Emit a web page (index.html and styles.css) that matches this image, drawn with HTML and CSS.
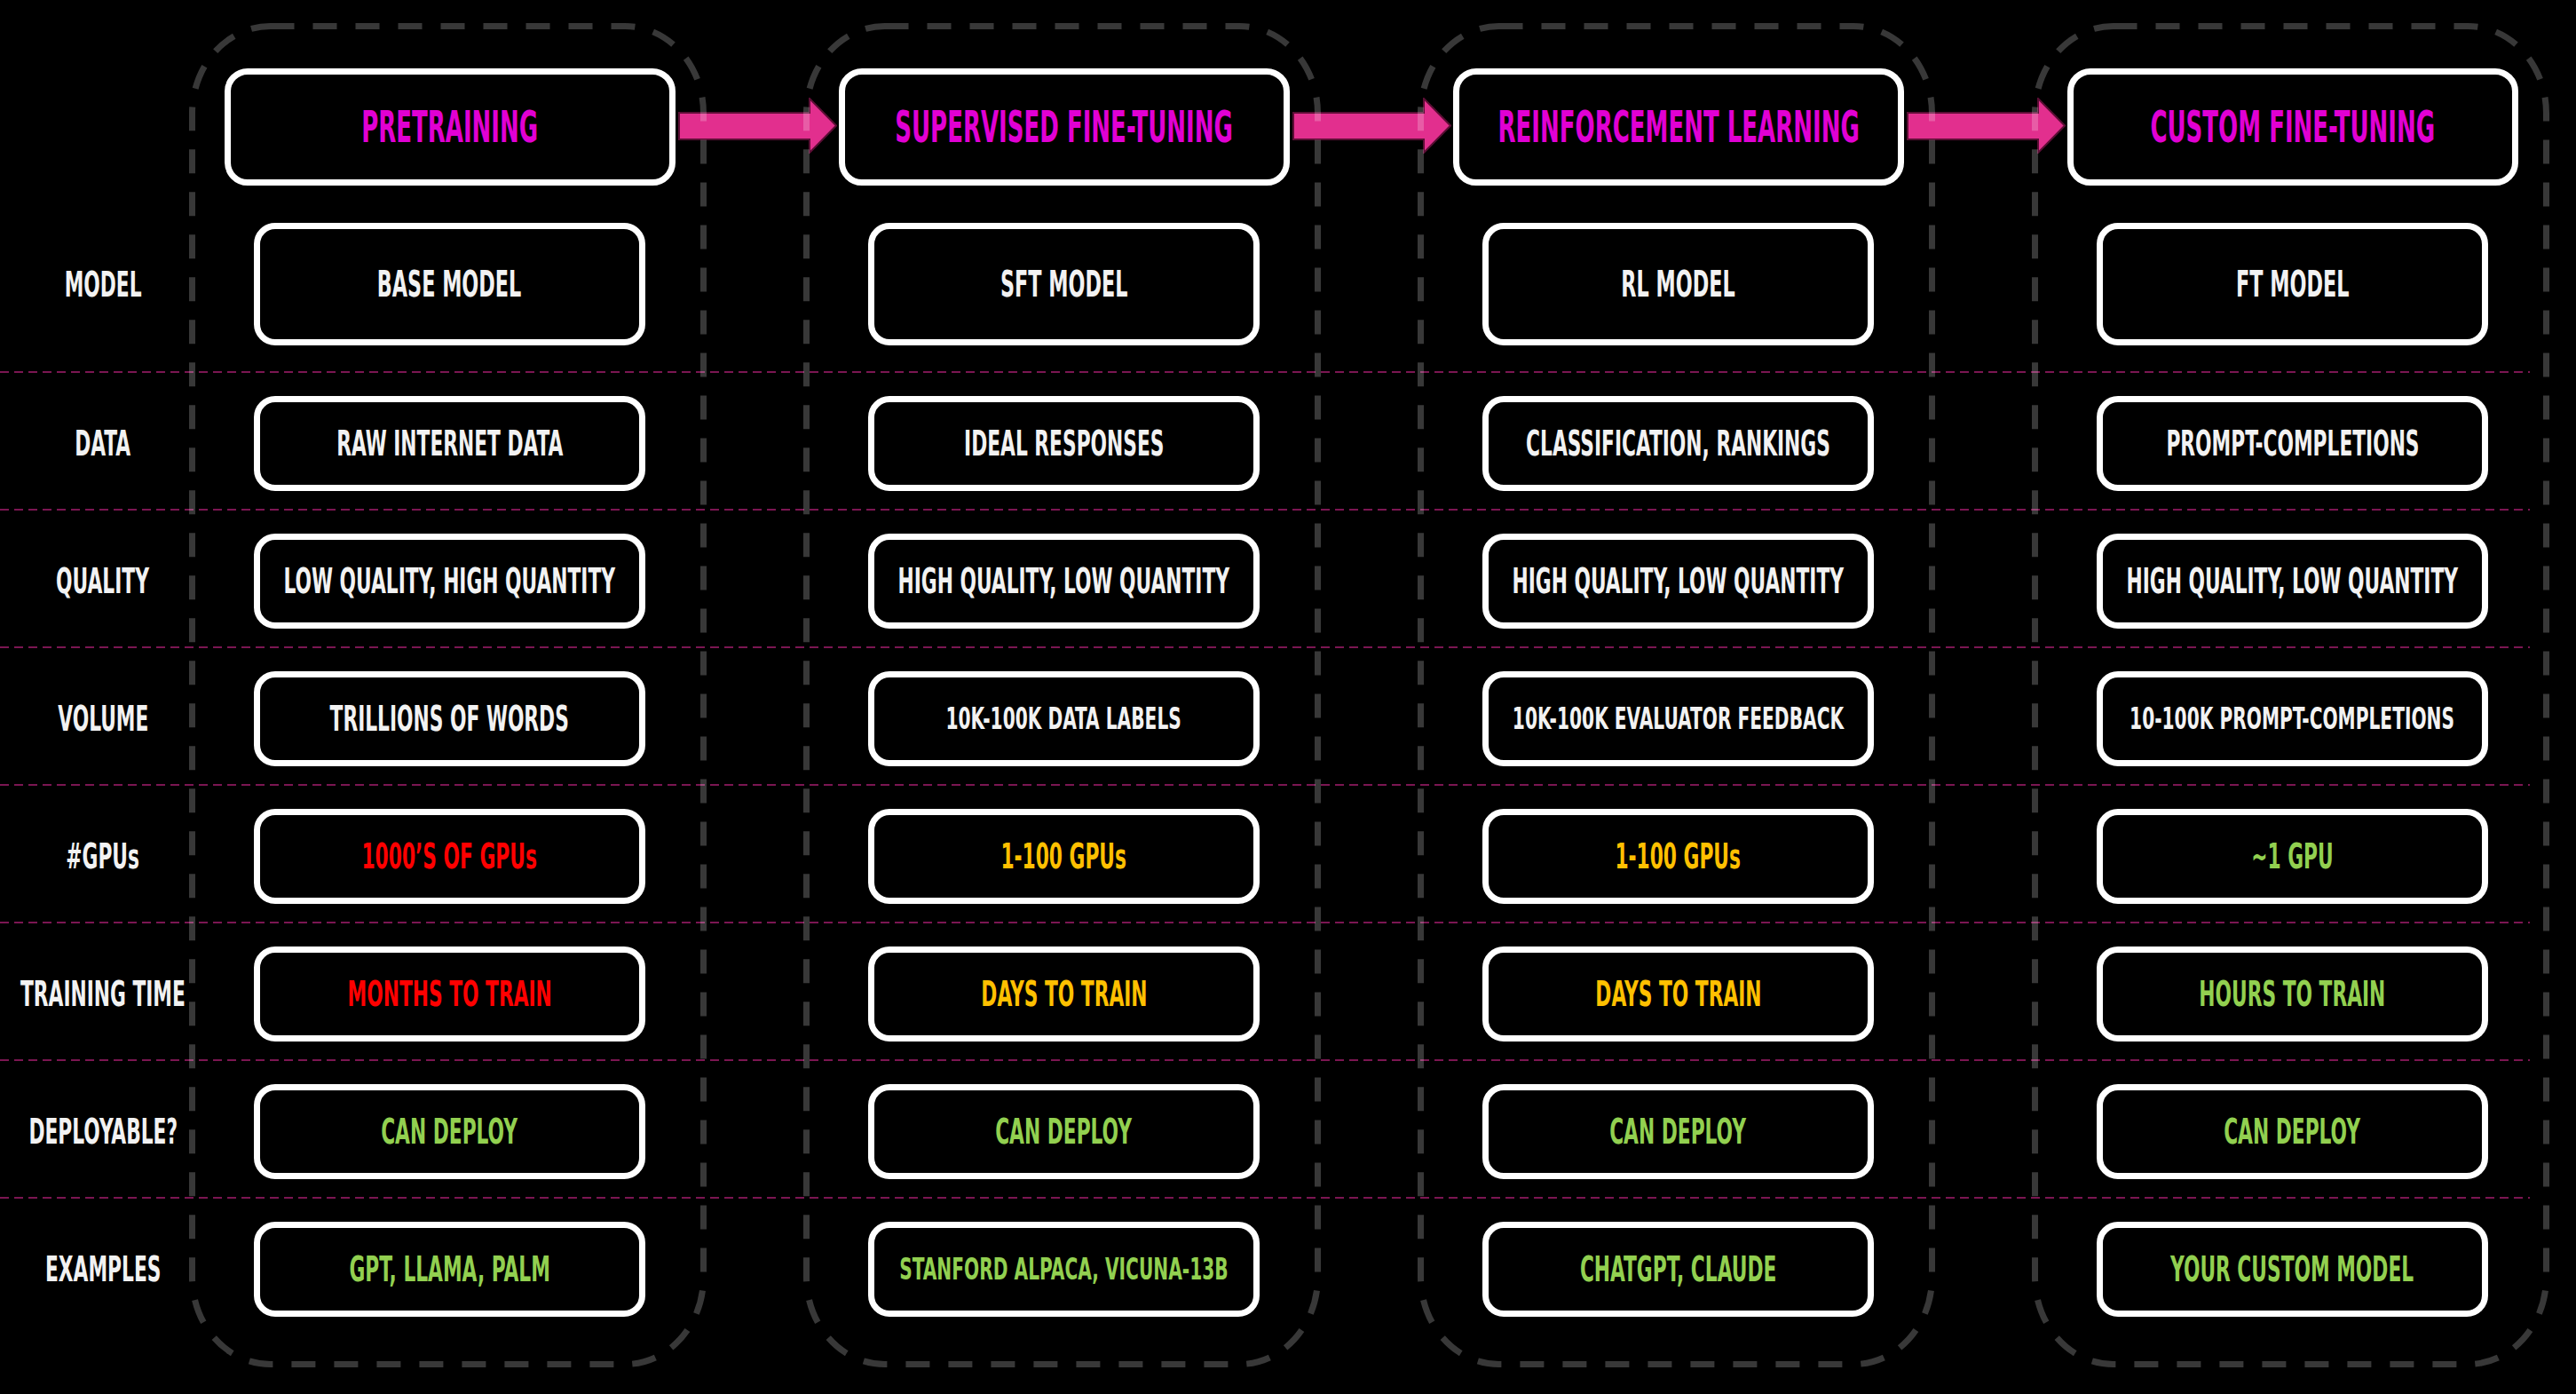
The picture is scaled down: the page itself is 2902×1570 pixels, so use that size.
FILE: index.html
```html
<!DOCTYPE html>
<html lang="en">
<head>
    <meta charset="UTF-8">
    <title>LLM Training Stages</title>
    <link rel="stylesheet" href="styles.css">
</head>
<body>
    <div class="board">
        <!-- stage headers -->
        <div class="stage c1"><span class="txt">PRETRAINING</span></div>
        <div class="arrow g1"><svg width="179" height="63" viewBox="0 0 179 63"><polygon points="1,17 148,17 148,1 178,31.5 148,62 148,47 1,47"/></svg></div>
        <div class="stage c2"><span class="txt">SUPERVISED FINE-TUNING</span></div>
        <div class="arrow g2"><svg width="179" height="63" viewBox="0 0 179 63"><polygon points="1,17 148,17 148,1 178,31.5 148,62 148,47 1,47"/></svg></div>
        <div class="stage c3"><span class="txt">REINFORCEMENT LEARNING</span></div>
        <div class="arrow g3"><svg width="179" height="63" viewBox="0 0 179 63"><polygon points="1,17 148,17 148,1 178,31.5 148,62 148,47 1,47"/></svg></div>
        <div class="stage c4"><span class="txt">CUSTOM FINE-TUNING</span></div>

        <!-- model -->
        <div class="label model r1"><span class="txt">MODEL</span></div>
        <div class="cell model r1 c1"><span class="txt">BASE MODEL</span></div>
        <div class="cell model r1 c2"><span class="txt">SFT MODEL</span></div>
        <div class="cell model r1 c3"><span class="txt">RL MODEL</span></div>
        <div class="cell model r1 c4"><span class="txt">FT MODEL</span></div>

        <!-- data -->
        <div class="rule r2"></div>
        <div class="label r2"><span class="txt">DATA</span></div>
        <div class="cell r2 c1"><span class="txt">RAW INTERNET DATA</span></div>
        <div class="cell r2 c2"><span class="txt">IDEAL RESPONSES</span></div>
        <div class="cell r2 c3"><span class="txt">CLASSIFICATION, RANKINGS</span></div>
        <div class="cell r2 c4"><span class="txt">PROMPT-COMPLETIONS</span></div>

        <!-- quality -->
        <div class="rule r3"></div>
        <div class="label r3"><span class="txt">QUALITY</span></div>
        <div class="cell r3 c1"><span class="txt">LOW QUALITY, HIGH QUANTITY</span></div>
        <div class="cell r3 c2"><span class="txt">HIGH QUALITY, LOW QUANTITY</span></div>
        <div class="cell r3 c3"><span class="txt">HIGH QUALITY, LOW QUANTITY</span></div>
        <div class="cell r3 c4"><span class="txt">HIGH QUALITY, LOW QUANTITY</span></div>

        <!-- volume -->
        <div class="rule r4"></div>
        <div class="label r4"><span class="txt">VOLUME</span></div>
        <div class="cell r4 c1"><span class="txt">TRILLIONS OF WORDS</span></div>
        <div class="cell small r4 c2"><span class="txt">10K-100K DATA LABELS</span></div>
        <div class="cell small r4 c3"><span class="txt">10K-100K EVALUATOR FEEDBACK</span></div>
        <div class="cell small r4 c4"><span class="txt">10-100K PROMPT-COMPLETIONS</span></div>

        <!-- gpus -->
        <div class="rule r5"></div>
        <div class="label r5"><span class="txt">#GPUs</span></div>
        <div class="cell red r5 c1"><span class="txt">1000’S OF GPUs</span></div>
        <div class="cell amber r5 c2"><span class="txt">1-100 GPUs</span></div>
        <div class="cell amber r5 c3"><span class="txt">1-100 GPUs</span></div>
        <div class="cell green r5 c4"><span class="txt">~1 GPU</span></div>

        <!-- training time -->
        <div class="rule r6"></div>
        <div class="label r6"><span class="txt">TRAINING TIME</span></div>
        <div class="cell red r6 c1"><span class="txt">MONTHS TO TRAIN</span></div>
        <div class="cell amber r6 c2"><span class="txt">DAYS TO TRAIN</span></div>
        <div class="cell amber r6 c3"><span class="txt">DAYS TO TRAIN</span></div>
        <div class="cell green r6 c4"><span class="txt">HOURS TO TRAIN</span></div>

        <!-- deployable -->
        <div class="rule r7"></div>
        <div class="label r7"><span class="txt">DEPLOYABLE?</span></div>
        <div class="cell green r7 c1"><span class="txt">CAN DEPLOY</span></div>
        <div class="cell green r7 c2"><span class="txt">CAN DEPLOY</span></div>
        <div class="cell green r7 c3"><span class="txt">CAN DEPLOY</span></div>
        <div class="cell green r7 c4"><span class="txt">CAN DEPLOY</span></div>

        <!-- examples -->
        <div class="rule r8"></div>
        <div class="label r8"><span class="txt">EXAMPLES</span></div>
        <div class="cell green r8 c1"><span class="txt">GPT, LLAMA, PALM</span></div>
        <div class="cell green small r8 c2"><span class="txt">STANFORD ALPACA, VICUNA-13B</span></div>
        <div class="cell green r8 c3"><span class="txt">CHATGPT, CLAUDE</span></div>
        <div class="cell green r8 c4"><span class="txt">YOUR CUSTOM MODEL</span></div>

        <!-- dashed lanes, drawn last so they sit over the arrows -->
        <div class="lane c1"><svg width="583" height="1514"><rect x="3.5" y="3.5" width="576" height="1507" rx="88" ry="98"/></svg></div>
        <div class="lane c2"><svg width="583" height="1514"><rect x="3.5" y="3.5" width="576" height="1507" rx="88" ry="98"/></svg></div>
        <div class="lane c3"><svg width="583" height="1514"><rect x="3.5" y="3.5" width="576" height="1507" rx="88" ry="98"/></svg></div>
        <div class="lane c4"><svg width="583" height="1514"><rect x="3.5" y="3.5" width="576" height="1507" rx="88" ry="98"/></svg></div>
    </div>
</body>
</html>
```

FILE: styles.css
```css
body {
    margin: 0;
    background: #000;
    color: #f2f2f2;
    font-family: "Liberation Sans Narrow", "DejaVu Sans Condensed", sans-serif;
    font-weight: 700;
}
.board {
    display: grid;
    grid-template-columns: 213px 583px 109px 583px 109px 583px 109px 583px;
    grid-template-rows: 204px 189px repeat(7, 155px) 36px;
    padding-top: 26px;
    width: 2872px;
}
.c1 { grid-column: 2; }
.c2 { grid-column: 4; }
.c3 { grid-column: 6; }
.c4 { grid-column: 8; }
.g1 { grid-column: 3; }
.g2 { grid-column: 5; }
.g3 { grid-column: 7; }
.r1 { grid-row: 2; }
.r2 { grid-row: 3; }
.r3 { grid-row: 4; }
.r4 { grid-row: 5; }
.r5 { grid-row: 6; }
.r6 { grid-row: 7; }
.r7 { grid-row: 8; }
.r8 { grid-row: 9; }

/* the font is squeezed to get the narrow poster lettering */
.txt {
    display: inline-block;
    white-space: nowrap;
    transform: scaleX(0.62);
}

.stage {
    grid-row: 1;
    margin: 51px 0 0 40px;
    width: 508px;
    height: 132px;
    box-sizing: border-box;
    border: 7px solid #fff;
    border-radius: 26px;
    display: flex;
    align-items: center;
    justify-content: center;
    color: #e100d3;
    font-size: 49px;
}
.stage .txt {
    transform: scaleX(0.59);
}
.arrow {
    grid-row: 1;
    margin: 84px 0 0 -32px;
    width: 179px;
    height: 63px;
}
.arrow svg {
    display: block;
}
.arrow polygon {
    fill: #e22f8e;
    stroke: #5c0e35;
    stroke-width: 2;
}

.label {
    grid-column: 1;
    margin-top: 27px;
    height: 107px;
    padding-left: 19px;
    display: flex;
    align-items: center;
    justify-content: center;
    font-size: 39px;
}
.cell {
    margin: 27px 0 0 73px;
    width: 441px;
    height: 107px;
    box-sizing: border-box;
    border: 7px solid #fff;
    border-radius: 24px;
    display: flex;
    align-items: center;
    justify-content: center;
    font-size: 39px;
}
.label.model {
    margin-top: 21px;
    height: 138px;
}
.cell.model {
    margin-top: 21px;
    height: 138px;
    font-size: 40px;
}
.cell.small {
    font-size: 33px;
}
.cell.small .txt {
    transform: scaleX(0.68);
}
.red { color: #ff0000; }
.amber { color: #ffc000; }
.green { color: #92d050; }

.rule {
    grid-column: 1 / -1;
    align-self: start;
    margin: -1px 22px 0 0;
    height: 2px;
    background: repeating-linear-gradient(90deg, #7b1652 0 10px, transparent 10px 16px);
}

.lane {
    grid-row: 1 / -1;
}
.lane svg {
    display: block;
}
.lane rect {
    fill: none;
    stroke: rgba(255, 255, 255, 0.22);
    stroke-width: 7;
    stroke-dasharray: 27 21;
}
```
